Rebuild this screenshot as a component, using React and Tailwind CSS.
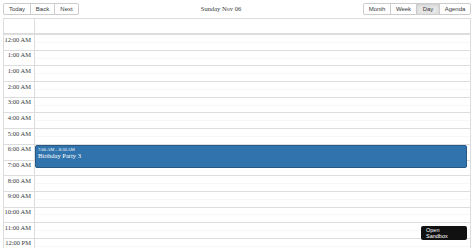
import React from 'react';

const labels = [
  '12:00 AM', '1:00 AM', '1:00 AM', '2:00 AM', '3:00 AM', '4:00 AM', '5:00 AM',
  '6:00 AM', '7:00 AM', '8:00 AM', '9:00 AM', '10:00 AM', '11:00 AM', '12:00 PM',
];

function ToolButton({ children, w, active, first, last }) {
  return (
    <button
      className={
        'h-[12px] border border-[#ccc] text-[6px] leading-none text-[#373a3c] ' +
        (first ? 'rounded-l-[2px] ' : '-ml-px ') +
        (last ? 'rounded-r-[2px] ' : '') +
        (active ? 'bg-[#e6e6e6] border-[#adadad] shadow-[inset_0_1px_3px_rgba(0,0,0,0.125)]' : 'bg-white')
      }
      style={{ width: w, fontFamily: '"Liberation Sans", Arial, sans-serif' }}
    >
      {children}
    </button>
  );
}

export default function App() {
  return (
    <div
      className="relative w-[474px] h-[248px] overflow-hidden bg-white text-[#373a3c]"
      style={{ fontFamily: '"Liberation Serif", "Times New Roman", serif' }}
    >
      {/* Toolbar */}
      <div className="flex items-center px-[3px] pt-[3px] mb-[3px]">
        <div className="flex">
          <ToolButton w={28} first>Today</ToolButton>
          <ToolButton w={25}>Back</ToolButton>
          <ToolButton w={25} last>Next</ToolButton>
        </div>
        <div className="flex-1 text-center text-[6.5px] leading-none">Sunday Nov 06</div>
        <div className="flex">
          <ToolButton w={28} first>Month</ToolButton>
          <ToolButton w={27}>Week</ToolButton>
          <ToolButton w={24} active>Day</ToolButton>
          <ToolButton w={32} last>Agenda</ToolButton>
        </div>
      </div>

      {/* Calendar */}
      <div className="mx-[3px] border border-[#ddd]">
        <div className="flex h-[14px]">
          <div className="w-[31px] border-r border-[#ddd]" />
          <div className="flex-1" />
        </div>
        <div className="flex border-t-2 border-[#ddd]">
          <div className="w-[31px] border-r border-[#ddd]">
            {labels.map((l, i) => (
              <div key={i} className="h-[15.7px] border-b border-[#ddd] text-right pr-[3px] text-[6.5px] leading-[7px] pt-[0.5px] whitespace-nowrap">
                {l}
              </div>
            ))}
          </div>
          <div className="relative flex-1">
            {labels.map((l, i) => (
              <div key={i} className="h-[15.7px] border-b border-[#ddd] flex flex-col">
                <div className="flex-1" />
                <div className="flex-1 border-t border-[#f7f7f7]" />
              </div>
            ))}
            <div className="absolute left-0 right-[3px] top-[109.9px] h-[23.5px] rounded-[2px] border border-[#265985] bg-[#3174ad] text-white px-[2px] pt-[1px]">
              <div className="text-[4.5px] leading-[5px]">7:00 AM – 8:30 AM</div>
              <div className="text-[6.5px] leading-[7px]">Birthday Party 3</div>
            </div>
          </div>
        </div>
      </div>

      {/* Open Sandbox */}
      <div
        className="absolute right-[7px] bottom-[8px] w-[46px] h-[14px] rounded-[2px] bg-[#111] text-white text-[5.5px] leading-[6px] px-[5px] pt-[1px]"
        style={{ fontFamily: '"Liberation Sans", Arial, sans-serif' }}
      >
        Open
        <br />
        Sandbox
      </div>
    </div>
  );
}
